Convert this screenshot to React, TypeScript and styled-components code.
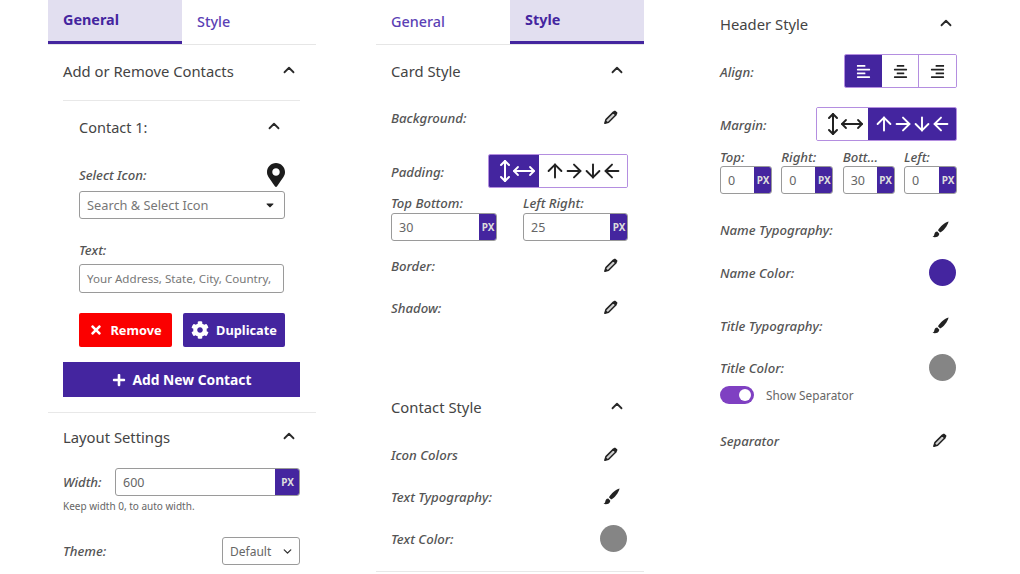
import { createGlobalStyle, styled } from "styled-components";
import { ChevronUp, ChevronDown, ArrowUp, ArrowRight, ArrowDown, ArrowLeft, MoveVertical, MoveHorizontal } from "lucide-react";
import { FaMapMarkerAlt, FaTimes, FaPlus, FaCog, FaAlignLeft, FaAlignCenter, FaAlignRight, FaCaretDown } from "react-icons/fa";

const purple = "#44259f";

const Global = createGlobalStyle`
  html, body { margin: 0; padding: 0; background: #fff; }
  body { font-family: "Noto Sans", "Open Sans", sans-serif; color: #444; overflow: hidden; }
`;

const Page = styled.div`
  display: flex;
  width: 1020px;
  height: 574px;
  padding-left: 48px;
  gap: 60px;
  box-sizing: border-box;
  overflow: hidden;
`;

const Column = styled.div`
  width: 268px;
  flex: none;
`;

const TabBar = styled.div`
  display: flex;
  height: 45px;
  border-bottom: 1px solid #e6e6e6;
  box-sizing: border-box;
`;

const Tab = styled.div<{ $active?: boolean }>`
  width: 134px;
  height: 44px;
  box-sizing: border-box;
  font-size: 14.4px;
  font-weight: ${(p) => (p.$active ? 700 : 500)};
  color: ${(p) => (p.$active ? purple : "#5b3fb5")};
  background: ${(p) => (p.$active ? "#e2dff0" : "transparent")};
  border-bottom: ${(p) => (p.$active ? `3px solid ${purple}` : "none")};
  padding: ${(p) => (p.$active ? "10px 0 0 15px" : "12px 0 0 15px")};
  line-height: 20px;
`;

const Body = styled.div<{ $flip?: boolean }>`
  padding: ${(p) => (p.$flip ? "0 15px 0 16px" : "0 16px 0 15px")};
`;

const SectionHead = styled.div<{ $top: number }>`
  display: flex;
  justify-content: space-between;
  align-items: center;
  height: 24px;
  margin-top: ${(p) => p.$top}px;
  font-size: 14.8px;
  color: #444;
  svg { margin-right: 2px; margin-top: -3px; color: #2a2a2a; }
`;

const ContactHead = styled(SectionHead)`
  margin-left: 16px;
  margin-right: 15px;
  font-size: 14.5px;
`;

const Rule = styled.div<{ $top: number; $inset?: boolean }>`
  height: 1px;
  background: #e8e8e8;
  margin: ${(p) => p.$top}px ${(p) => (p.$inset ? "0" : "-16px")} 0 ${(p) => (p.$inset ? "0" : "-15px")};
`;

const Row = styled.div<{ $top: number; $h?: number; $ml?: number; $mr?: number }>`
  display: flex;
  justify-content: space-between;
  align-items: center;
  height: ${(p) => p.$h ?? 20}px;
  margin-top: ${(p) => p.$top}px;
  margin-left: ${(p) => p.$ml ?? 0}px;
  margin-right: ${(p) => p.$mr ?? 0}px;
`;

const Label = styled.span`
  font-size: 13.2px;
  font-style: italic;
  font-weight: 500;
  color: #555;
  white-space: nowrap;
`;

const BarLabel = styled(Label)`
  margin-top: 2px;
`;

const SmallLabel = styled(Label)`
  display: block;
  line-height: 14px;
`;

const Field = styled.div<{ $w: number; $h?: number; $top?: number; $ml?: number; $size?: number; $color?: string }>`
  display: flex;
  align-items: center;
  justify-content: space-between;
  width: ${(p) => p.$w}px;
  height: ${(p) => p.$h ?? 28}px;
  margin-top: ${(p) => p.$top ?? 0}px;
  margin-left: ${(p) => p.$ml ?? 0}px;
  box-sizing: border-box;
  border: 1px solid #9a9a9a;
  border-radius: 3px;
  padding-left: 7px;
  font-size: ${(p) => p.$size ?? 12.5}px;
  color: ${(p) => p.$color ?? "#666"};
  background: #fff;
  overflow: hidden;
  white-space: nowrap;
`;

const Unit = styled.span<{ $w?: number }>`
  align-self: stretch;
  flex: none;
  width: ${(p) => p.$w ?? 18}px;
  margin: -1px -1px -1px 0;
  background: ${purple};
  color: #ddd;
  font-size: 10px;
  font-weight: 700;
  display: flex;
  align-items: center;
  justify-content: center;
  border-radius: 0 3px 3px 0;
`;

const Caret = styled(FaCaretDown)`
  margin-right: 8px;
  color: #222;
`;

const SelectChevron = styled(ChevronDown)`
  margin-right: 5px;
  color: #333;
`;

const ActionRow = styled.div`
  display: flex;
  gap: 11px;
  margin: 20px 0 0 16px;
`;

const ActionButton = styled.div<{ $bg: string; $w: number }>`
  display: flex;
  align-items: center;
  justify-content: center;
  gap: 7px;
  width: ${(p) => p.$w}px;
  height: 34px;
  border-radius: 2px;
  background: ${(p) => p.$bg};
  color: #fff;
  font-size: 12.8px;
  font-weight: 700;
`;

const WideButton = styled(ActionButton)`
  margin-top: 15px;
  height: 35px;
  font-size: 13.8px;
  border-radius: 0;
`;

const Hint = styled.div`
  font-size: 10px;
  color: #666;
  margin-top: 3px;
  line-height: 14px;
`;

const Segments = styled.div<{ $w: number }>`
  display: flex;
  width: ${(p) => p.$w}px;
  height: 34px;
  box-sizing: border-box;
  border: 1px solid #b48ee0;
  border-radius: 2px;
  overflow: hidden;
  flex: none;
`;

const Segment = styled.div<{ $on?: boolean; $w?: number; $line?: boolean }>`
  display: flex;
  align-items: center;
  justify-content: center;
  width: ${(p) => (p.$w ? `${p.$w}px` : "auto")};
  flex: ${(p) => (p.$w ? "none" : 1)};
  background: ${(p) => (p.$on ? purple : "#fff")};
  color: ${(p) => (p.$on ? "#fff" : "#222")};
  border-left: ${(p) => (p.$line ? "1px solid #b48ee0" : "none")};
  svg { flex: none; }
`;

const SplitGlyphs = styled.span`
  display: flex;
  svg + svg { margin-left: -5px; }
`;

const ArrowGlyphs = styled.span`
  display: flex;
  svg { margin: 0 -1.5px; }
`;

const TwoFields = styled.div`
  display: flex;
  justify-content: space-between;
  margin-top: 8px;
`;

const FourFields = styled.div`
  display: grid;
  grid-template-columns: 52px 52px 52px 53px;
  justify-content: space-between;
  margin-top: 9px;
`;

const FieldStack = styled.div`
  min-width: 0;
`;

const IconSlot = styled.span`
  display: flex;
  justify-content: center;
  width: 20px;
  margin-right: 7px;
  margin-top: -2px;
  color: #222;
`;

const Swatch = styled.span<{ $color: string }>`
  width: 27px;
  height: 27px;
  margin: -2px 1px 0 0;
  border-radius: 50%;
  background: ${(p) => p.$color};
  flex: none;
`;

const SwitchRow = styled.div`
  display: flex;
  align-items: center;
  gap: 12px;
  margin-top: 4px;
  font-size: 11.8px;
  color: #666;
`;

const Switch = styled.span`
  display: flex;
  align-items: center;
  justify-content: flex-end;
  width: 34px;
  height: 18px;
  padding-right: 3px;
  box-sizing: border-box;
  border-radius: 9px;
  background: #7f40c2;
  &::after {
    content: "";
    width: 12px;
    height: 12px;
    border-radius: 50%;
    background: #fff;
  }
`;

function Pencil() {
  return (
    <IconSlot>
      <svg width="14" height="14" viewBox="0 0 16 16">
        <path d="M10.8 2.4l3 3-8.6 8.6-4.2 1.2 1.2-4.2z" fill="#cfcfcf" stroke="#222" strokeWidth="1.7" strokeLinejoin="round" />
        <path d="M9.8 3.2l3.2 3.2 2-2a1.2 1.2 0 0 0 0-1.7L13.3 1a1.2 1.2 0 0 0-1.7 0z" fill="#222" />
        <path d="M.8 15.2l1-3.8 2.8 2.8z" fill="#222" />
      </svg>
    </IconSlot>
  );
}

function Brush() {
  return (
    <IconSlot>
      <svg width="17" height="17" viewBox="0 0 16 16">
        <path d="M15.6.4C12 1.4 7.2 5.4 5.6 8.8l2 2C11 9.4 14.6 4.4 15.6.4z" fill="#222" />
        <path d="M5 9.8c-2 0-2.7 1.6-2.9 3.2-.1 1-.8 1.5-1.7 1.9 2.6.9 6.3.2 6.5-3z" fill="#222" />
      </svg>
    </IconSlot>
  );
}

function SplitArrows() {
  return (
    <SplitGlyphs>
      <MoveVertical size={24} strokeWidth={2} />
      <MoveHorizontal size={24} strokeWidth={1.8} />
    </SplitGlyphs>
  );
}

function AllArrows() {
  return (
    <ArrowGlyphs>
      <ArrowUp size={22} strokeWidth={2.1} />
      <ArrowRight size={22} strokeWidth={2.1} />
      <ArrowDown size={22} strokeWidth={2.1} />
      <ArrowLeft size={22} strokeWidth={2.1} />
    </ArrowGlyphs>
  );
}

export default function App() {
  return (
    <Page>
      <Global />
      <Column>
        <TabBar>
          <Tab $active>General</Tab>
          <Tab>Style</Tab>
        </TabBar>
        <Body>
          <SectionHead $top={14}>
            Add or Remove Contacts
            <ChevronUp size={18} strokeWidth={2.4} />
          </SectionHead>
          <Rule $top={17} $inset />
          <ContactHead $top={14}>
            Contact 1:
            <ChevronUp size={18} strokeWidth={2.4} />
          </ContactHead>
          <Row $top={22} $h={28} $ml={16} $mr={12}>
            <Label>Select Icon:</Label>
            <FaMapMarkerAlt size={24} color="#1c1c1c" />
          </Row>
          <Field $w={206} $ml={16} $top={2} $size={12.8} $color="#777">
            Search &amp; Select Icon
            <Caret size={12} />
          </Field>
          <Row $top={21} $ml={16}>
            <Label>Text:</Label>
          </Row>
          <Field $w={205} $h={29} $ml={16} $top={4} $size={11.6} $color="#777">
            Your Address, State, City, Country,
          </Field>
          <ActionRow>
            <ActionButton $bg="#fb0000" $w={93}>
              <FaTimes size={14} />
              Remove
            </ActionButton>
            <ActionButton $bg={purple} $w={102}>
              <FaCog size={18} />
              Duplicate
            </ActionButton>
          </ActionRow>
          <WideButton $bg={purple} $w={237}>
            <FaPlus size={14} />
            Add New Contact
          </WideButton>
          <Rule $top={15} />
          <SectionHead $top={12}>
            Layout Settings
            <ChevronUp size={18} strokeWidth={2.4} />
          </SectionHead>
          <Row $top={19} $h={28}>
            <Label>Width:</Label>
            <Field $w={185}>
              600
              <Unit $w={25}>PX</Unit>
            </Field>
          </Row>
          <Hint>Keep width 0, to auto width.</Hint>
          <Row $top={24} $h={28}>
            <Label>Theme:</Label>
            <Field $w={78} $size={12}>
              Default
              <SelectChevron size={13} strokeWidth={2.5} />
            </Field>
          </Row>
        </Body>
      </Column>

      <Column>
        <TabBar>
          <Tab>General</Tab>
          <Tab $active>Style</Tab>
        </TabBar>
        <Body>
          <SectionHead $top={14}>
            Card Style
            <ChevronUp size={18} strokeWidth={2.4} />
          </SectionHead>
          <Row $top={25}>
            <Label>Background:</Label>
            <Pencil />
          </Row>
          <Row $top={26} $h={34}>
            <BarLabel>Padding:</BarLabel>
            <Segments $w={140}>
              <Segment $on $w={50}><SplitArrows /></Segment>
              <Segment><AllArrows /></Segment>
            </Segments>
          </Row>
          <TwoFields>
            <FieldStack>
              <SmallLabel>Top Bottom:</SmallLabel>
              <Field $w={106} $top={3}>
                30
                <Unit>PX</Unit>
              </Field>
            </FieldStack>
            <FieldStack>
              <SmallLabel>Left Right:</SmallLabel>
              <Field $w={105} $top={3}>
                25
                <Unit>PX</Unit>
              </Field>
            </FieldStack>
          </TwoFields>
          <Row $top={15}>
            <Label>Border:</Label>
            <Pencil />
          </Row>
          <Row $top={22}>
            <Label>Shadow:</Label>
            <Pencil />
          </Row>
          <SectionHead $top={77}>
            Contact Style
            <ChevronUp size={18} strokeWidth={2.4} />
          </SectionHead>
          <Row $top={26}>
            <Label>Icon Colors</Label>
            <Pencil />
          </Row>
          <Row $top={22}>
            <Label>Text Typography:</Label>
            <Brush />
          </Row>
          <Row $top={22}>
            <Label>Text Color:</Label>
            <Swatch $color="#858585" />
          </Row>
          <Rule $top={22} />
        </Body>
      </Column>

      <Column>
        <Body $flip>
          <SectionHead $top={12}>
            Header Style
            <ChevronUp size={18} strokeWidth={2.4} />
          </SectionHead>
          <Row $top={18} $h={34}>
            <BarLabel>Align:</BarLabel>
            <Segments $w={113}>
              <Segment $on><FaAlignLeft size={15} /></Segment>
              <Segment><FaAlignCenter size={15} /></Segment>
              <Segment $line><FaAlignRight size={15} /></Segment>
            </Segments>
          </Row>
          <Row $top={19} $h={34}>
            <BarLabel>Margin:</BarLabel>
            <Segments $w={141}>
              <Segment $w={51}><SplitArrows /></Segment>
              <Segment $on><AllArrows /></Segment>
            </Segments>
          </Row>
          <FourFields>
            <FieldStack>
              <SmallLabel>Top:</SmallLabel>
              <Field $w={52} $top={2}>0<Unit>PX</Unit></Field>
            </FieldStack>
            <FieldStack>
              <SmallLabel>Right:</SmallLabel>
              <Field $w={52} $top={2}>0<Unit>PX</Unit></Field>
            </FieldStack>
            <FieldStack>
              <SmallLabel>Bott...</SmallLabel>
              <Field $w={52} $top={2}>30<Unit>PX</Unit></Field>
            </FieldStack>
            <FieldStack>
              <SmallLabel>Left:</SmallLabel>
              <Field $w={53} $top={2}>0<Unit>PX</Unit></Field>
            </FieldStack>
          </FourFields>
          <Row $top={26}>
            <Label>Name Typography:</Label>
            <Brush />
          </Row>
          <Row $top={19} $h={28}>
            <Label>Name Color:</Label>
            <Swatch $color={purple} />
          </Row>
          <Row $top={29}>
            <Label>Title Typography:</Label>
            <Brush />
          </Row>
          <Row $top={18} $h={28}>
            <Label>Title Color:</Label>
            <Swatch $color="#858585" />
          </Row>
          <SwitchRow>
            <Switch />
            Show Separator
          </SwitchRow>
          <Row $top={27}>
            <Label>Separator</Label>
            <Pencil />
          </Row>
        </Body>
      </Column>
    </Page>
  );
}
